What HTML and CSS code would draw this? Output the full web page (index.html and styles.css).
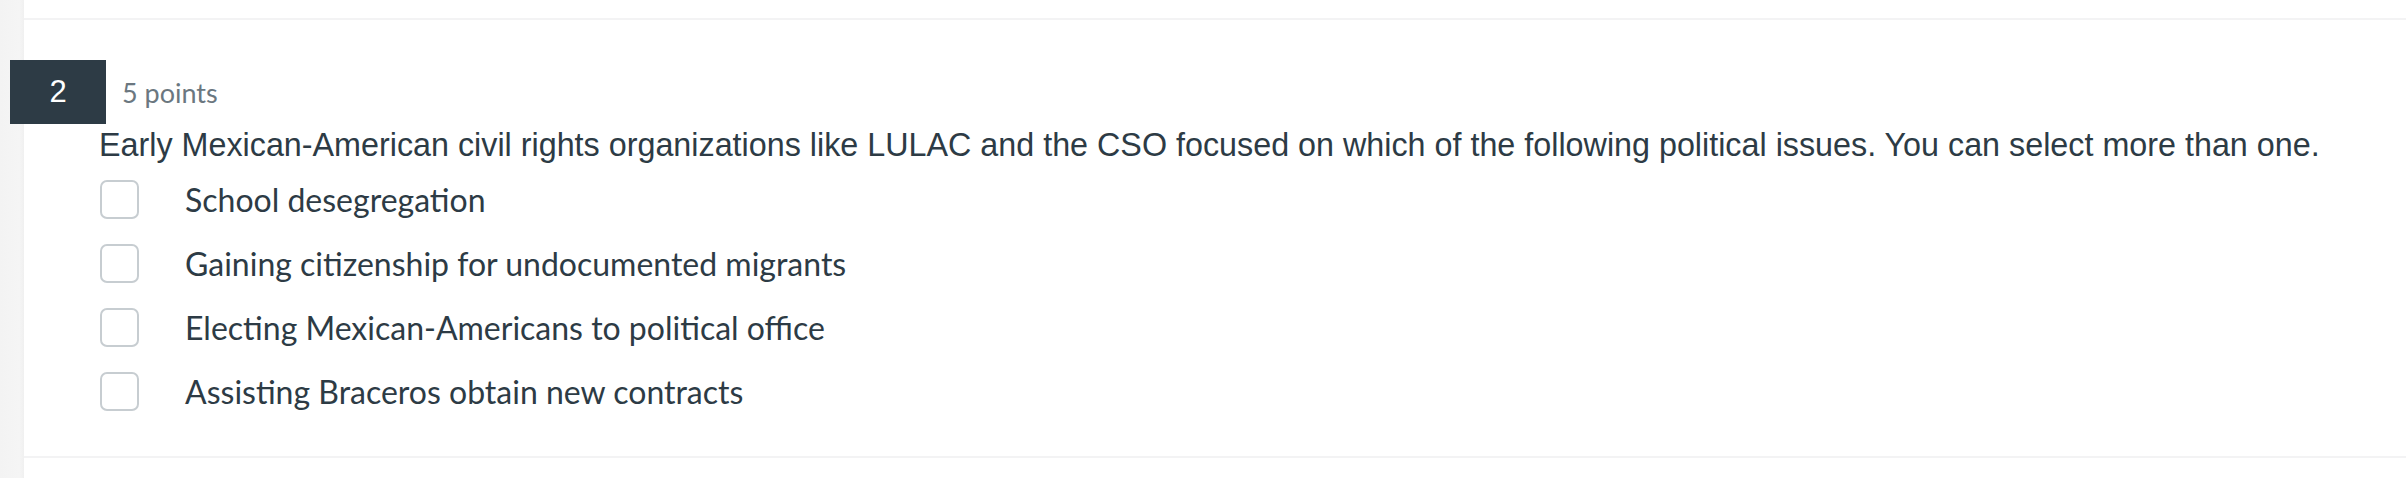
FILE: index.html
```html
<!DOCTYPE html>
<html>
<head>
<meta charset="utf-8">
<link rel="stylesheet" href="styles.css">
</head>
<body>
<div class="page">
  <div class="sidebar"></div>
  <div class="main">
    <div class="question">
      <div class="header">
        <div class="badge">2</div>
        <div class="points">5 points</div>
      </div>
      <div class="prompt">Early Mexican-American civil rights organizations like LULAC and the CSO focused on which of the following political issues. You can select more than one.</div>
      <div class="answers">
        <label class="answer"><span class="box"></span><span class="label">School desegregation</span></label>
        <label class="answer"><span class="box"></span><span class="label">Gaining citizenship for undocumented migrants</span></label>
        <label class="answer"><span class="box"></span><span class="label">Electing Mexican-Americans to political office</span></label>
        <label class="answer"><span class="box"></span><span class="label">Assisting Braceros obtain new contracts</span></label>
      </div>
    </div>
  </div>
</div>
</body>
</html>
```
FILE: styles.css
```css
html, body {
  margin: 0;
  padding: 0;
  background: #ffffff;
}
.page {
  display: flex;
  height: 478px;
}
.sidebar {
  width: 24px;
  flex: none;
  background: linear-gradient(to right, #f3f3f3, #f5f5f5 80%, #f0f0f0);
}
.main {
  flex: 1;
  padding-top: 18px;
}
.question {
  border-top: 2px solid #f3f3f4;
  border-bottom: 2px solid #f3f3f4;
  height: 440px;
  box-sizing: border-box;
}
.header {
  display: flex;
  align-items: center;
  margin-top: 40px;
  margin-left: -14px;
}
.badge {
  width: 96px;
  height: 64px;
  background: #2d3b45;
  color: #ffffff;
  font-family: "Liberation Sans", Arial, sans-serif;
  font-size: 31px;
  display: flex;
  align-items: center;
  justify-content: center;
}
.points {
  margin-left: 16px;
  font-family: Lato, sans-serif;
  font-size: 27px;
  color: #6b7780;
}
.prompt {
  margin-left: 75px;
  margin-top: 4px;
  font-family: "Liberation Sans", Arial, sans-serif;
  font-size: 32.3px;
  line-height: 34px;
  color: #2d3b45;
  white-space: nowrap;
}
.answers {
  margin-left: 76px;
  margin-top: 18px;
  display: flex;
  flex-direction: column;
  gap: 25px;
}
.answer {
  display: flex;
  align-items: center;
  height: 39px;
}
.box {
  width: 39px;
  height: 39px;
  box-sizing: border-box;
  border: 2px solid #c7cdd1;
  border-radius: 7px;
  background: #ffffff;
  flex: none;
}
.label {
  margin-left: 46px;
  font-family: Lato, sans-serif;
  font-size: 32px;
  color: #2d3b45;
}
```
